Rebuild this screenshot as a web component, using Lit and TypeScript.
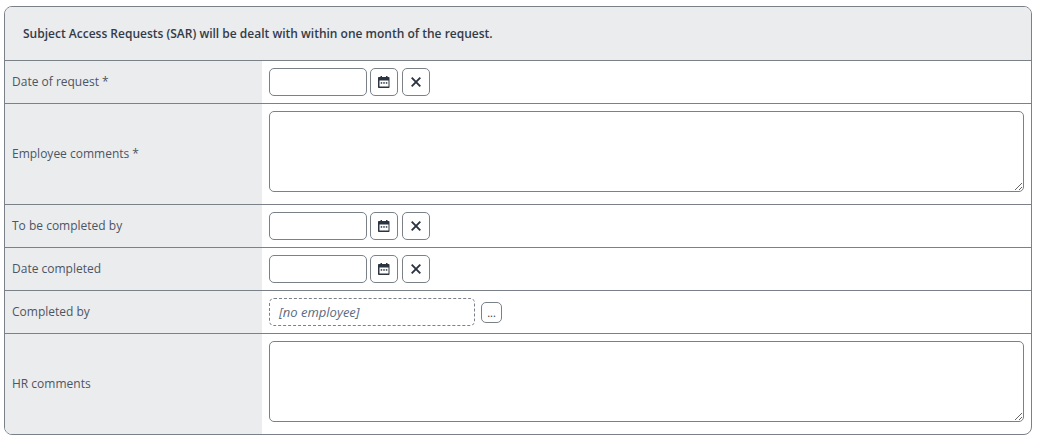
import { LitElement, html, css } from 'lit';
import { customElement } from 'lit/decorators.js';

const calendarIcon = html`
  <svg width="12" height="12" viewBox="0 0 12 12" aria-hidden="true">
    <path fill="#2b3440" d="M2.5 0h1.5v1h4V0h1.5v1h1.2a.8.8 0 0 1 .8.8v9.4a.8.8 0 0 1-.8.8H.8a.8.8 0 0 1-.8-.8V1.800a.8.8 0 0 1 .8-.8h1.700z" />
    <rect x="1.500" y="4.500" width="9" height="6" fill="#fff" />
    <rect x="2.700" y="6.200" width="1.500" height="1.500" fill="#2b3440" />
    <rect x="5.250" y="6.200" width="1.500" height="1.500" fill="#2b3440" />
    <rect x="7.800" y="6.200" width="1.500" height="1.500" fill="#2b3440" />
  </svg>
`;

const clearIcon = html`
  <svg width="10" height="10" viewBox="0 0 10 10" aria-hidden="true">
    <path d="M.7.7l8.600 8.600M9.300.7L.7 9.300" stroke="#2b3440" stroke-width="1.900" fill="none" />
  </svg>
`;

@customElement('app-root')
export class AppRoot extends LitElement {
  static styles = css`
    :host {
      display: block;
      box-sizing: border-box;
      padding: 6px 7px 8px 4px;
      font-family: 'Open Sans', sans-serif;
      font-size: 12px;
      color: #4b5563;
      background: #fff;
    }
    * {
      box-sizing: border-box;
    }
    .card {
      border: 1px solid #7b8188;
      border-radius: 8px;
      overflow: hidden;
    }
    .header {
      height: 53px;
      padding: 0 18px;
      display: flex;
      align-items: center;
      background: #ebecee;
      color: #333b47;
      font-weight: 600;
    }
    .row {
      display: grid;
      grid-template-columns: 257px minmax(0, 1fr);
      border-top: 1px solid #7b8188;
    }
    .label {
      display: flex;
      align-items: center;
      padding-left: 7px;
      padding-bottom: 2px;
      background: #ebecee;
    }
    .field {
      display: flex;
      align-items: center;
      gap: 4px;
      padding: 7px;
    }
    .field.tall {
      padding-bottom: 12px;
    }
    input,
    textarea,
    button {
      border: 1px solid #7b8188;
      border-radius: 5px;
      background: #fff;
      margin: 0;
    }
    input {
      width: 98px;
      height: 28px;
      margin-right: -1px;
    }
    textarea {
      display: block;
      width: 755px;
      height: 81px;
    }
    button {
      width: 28px;
      height: 28px;
      padding: 0;
      display: flex;
      align-items: center;
      justify-content: center;
    }
    .picker {
      width: 206px;
      height: 28px;
      padding-left: 9px;
      padding-bottom: 1px;
      display: flex;
      align-items: center;
      border: 1px dashed #7b8188;
      border-radius: 5px;
      font-size: 13px;
      font-style: italic;
      color: #5b6b80;
    }
    button.more {
      width: 21px;
      height: 21px;
      margin-left: 2px;
      font-family: inherit;
      font-size: 11px;
      line-height: 1;
      color: #333b47;
    }
  `;

  private dateField() {
    return html`
      <div class="field">
        <input type="text" />
        <button type="button">${calendarIcon}</button>
        <button type="button">${clearIcon}</button>
      </div>
    `;
  }

  private commentField() {
    return html`<div class="field tall"><textarea></textarea></div>`;
  }

  render() {
    return html`
      <div class="card">
        <div class="header">Subject Access Requests (SAR) will be dealt with within one month of the request.</div>
        <div class="row"><div class="label">Date of request *</div>${this.dateField()}</div>
        <div class="row"><div class="label">Employee comments *</div>${this.commentField()}</div>
        <div class="row"><div class="label">To be completed by</div>${this.dateField()}</div>
        <div class="row"><div class="label">Date completed</div>${this.dateField()}</div>
        <div class="row">
          <div class="label">Completed by</div>
          <div class="field">
            <div class="picker">[no employee]</div>
            <button type="button" class="more">...</button>
          </div>
        </div>
        <div class="row"><div class="label">HR comments</div>${this.commentField()}</div>
      </div>
    `;
  }
}
